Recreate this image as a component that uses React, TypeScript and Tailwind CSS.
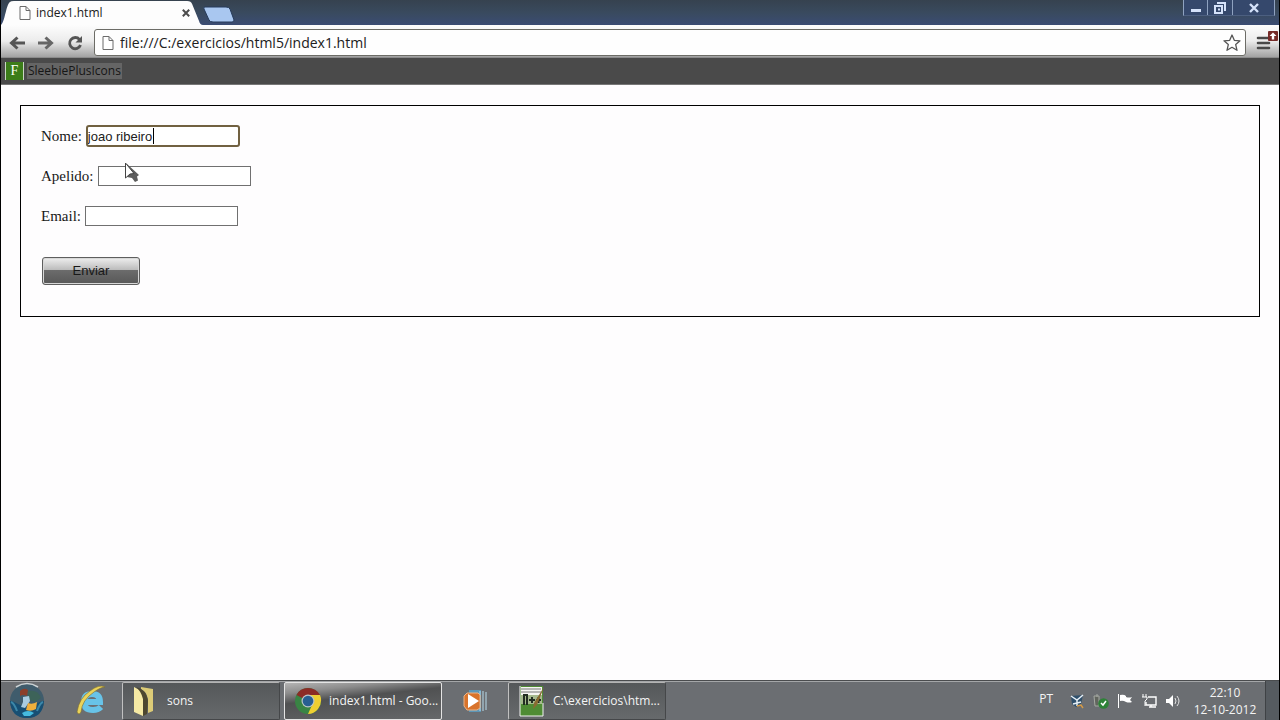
import { useState } from 'react';
import type { ReactNode } from 'react';

function PageIcon() {
  return (
    <svg aria-hidden="true" className="h-4 w-3 shrink-0" viewBox="0 0 12 16" fill="#fff" stroke="#6b6b6b">
      <path d="M1 1.5h6l4 4v9H1z" />
      <path d="M7 1.5v4h4" fill="none" />
    </svg>
  );
}

function TabStrip() {
  return (
    <div className="flex h-[25px] items-start justify-between bg-linear-to-b from-[#36424f] via-[#394a5e] to-[#3b4c73]">
      <div className="flex">
        <div className="relative h-[25px] w-[202px]">
          <svg aria-hidden="true" className="absolute inset-0 h-full w-full" viewBox="0 0 204 25" preserveAspectRatio="none">
            <path d="M0 25C4 22 5 5 9 2Q10 1 13 1H188Q192 1 193 4L200 21Q201 25 204 25Z" fill="#fdfdfd" />
          </svg>
          <div className="relative flex h-full items-center pr-[13px] pl-[18px]">
            <PageIcon />
            <span className="ml-[5px] grow text-[12px] leading-4 text-[#202020]">index1.html</span>
            <button type="button" aria-label="Close tab">
              <svg aria-hidden="true" className="h-2 w-2" viewBox="0 0 8 8" stroke="#4c4c4c" strokeWidth="2">
                <path d="M.8.8l6.4 6.4M7.2.8L.8 7.2" />
              </svg>
            </button>
          </div>
        </div>
        <button type="button" aria-label="New tab" className="mt-1">
          <svg aria-hidden="true" className="h-[17px] w-[32px]" viewBox="0 0 32 17">
            <path d="M2 1H23Q26 1 27 3L31 14Q31 16 29 16H10Q7 16 6 14L1 3Q0 1 2 1Z" fill="#a9c7f0" stroke="#263b5c" />
          </svg>
        </button>
      </div>
      <div className="mr-1 flex h-4 divide-x divide-[#8fa2c0] border-x border-b border-x-[#8fa2c0] border-b-[#4c5f80] bg-[#35486c]">
        <button type="button" aria-label="Minimize" className="flex w-6 items-center justify-center">
          <svg aria-hidden="true" className="h-3 w-3" viewBox="0 0 12 12" fill="#d5e2fa"><path d="M1 7h10v3H1z" /></svg>
        </button>
        <button type="button" aria-label="Restore" className="flex w-[25px] items-center justify-center">
          <svg aria-hidden="true" className="h-3 w-3" viewBox="0 0 12 12" fill="none" stroke="#d5e2fa" strokeWidth="2">
            <path d="M4 2V1h7v7h-1M1 4h7v7H1z" />
            <path d="M4 7.5h2" />
          </svg>
        </button>
        <button type="button" aria-label="Close" className="flex w-[41px] items-center justify-center">
          <svg aria-hidden="true" className="h-[10px] w-[10px]" viewBox="0 0 10 10" stroke="#d5e2fa" strokeWidth="2.4">
            <path d="M1 1l8 8M9 1L1 9" />
          </svg>
        </button>
      </div>
    </div>
  );
}

function Toolbar() {
  const [url, setUrl] = useState('file:///C:/exercicios/html5/index1.html');

  return (
    <div className="flex h-8 items-center bg-linear-to-b from-[#fdfdfd] via-[#ececec] to-[#a2a2a2] pr-2 pb-px pl-2 pt-1">
      <div className="flex w-[85px] shrink-0 gap-[13px]">
        <button type="button" aria-label="Back">
          <svg aria-hidden="true" className="h-4 w-4" viewBox="0 0 16 16" fill="none" stroke="#555" strokeWidth="3">
            <path d="M16 8H3M8.5 2.5L2.5 8l6 5.5" />
          </svg>
        </button>
        <button type="button" aria-label="Forward">
          <svg aria-hidden="true" className="h-4 w-4" viewBox="0 0 16 16" fill="none" stroke="#666" strokeWidth="3">
            <path d="M0 8h13M7.5 2.5l6 5.5-6 5.5" />
          </svg>
        </button>
        <button type="button" aria-label="Reload">
          <svg aria-hidden="true" className="h-4 w-4" viewBox="0 0 16 16">
            <path d="M12.5 4.5A5.600 5.600 0 1 0 13.5 10" fill="none" stroke="#555" strokeWidth="2.8" />
            <path d="M15 1v6.5H8.5z" fill="#555" />
          </svg>
        </button>
      </div>
      <div className="flex h-[27px] min-w-0 grow items-center rounded-[3px] border border-[#6c6c66] bg-[#fefefe] pr-1 pl-[7px]">
        <PageIcon />
        <input
          type="text"
          aria-label="Address"
          value={url}
          onChange={(e) => setUrl(e.target.value)}
          className="ml-[6px] min-w-0 grow bg-transparent text-[14px] leading-5 text-[#202020] outline-none"
        />
        <button type="button" aria-label="Bookmark this page">
          <svg aria-hidden="true" className="h-[18px] w-[18px]" viewBox="0 0 18 18" fill="#fff" stroke="#555" strokeWidth="1.3" strokeLinejoin="round">
            <path d="M9 1l2.3 5.3 5.7.5-4.3 3.8 1.3 5.700L9 13.3l-5 3 1.3-5.7L1 6.8l5.7-.5z" />
          </svg>
        </button>
      </div>
      <button type="button" aria-label="Menu" className="relative ml-[10px] h-4 w-[15px] shrink-0">
        <svg aria-hidden="true" className="h-4 w-[15px]" viewBox="0 0 15 16" stroke="#484848" strokeWidth="2.6" strokeLinecap="round">
          <path d="M2 3h11M2 8h11M2 13h11" />
        </svg>
        <svg aria-hidden="true" className="absolute -top-1 left-3 h-[10px] w-[10px]" viewBox="0 0 10 10">
          <rect width="10" height="10" rx="1" fill="#762b28" />
          <path d="M5 1.5L8.5 5H6.2v3.5H3.800V5H1.5z" fill="#fff" />
        </svg>
      </button>
    </div>
  );
}

function BookmarksBar() {
  return (
    <div className="flex h-7 items-center border-t border-b border-t-[#8b8b8b] border-b-[#777] bg-[#4a4a4a] pl-1">
      <a href="#bookmark" className="flex items-center gap-[3px] text-[12px] leading-4 text-[#161616]">
        <span className="flex h-[18px] w-[19px] items-center justify-center border-x border-[#c9d6c3] bg-[#3c7d19] font-['Liberation_Serif',serif] text-[14px] text-white">
          F
        </span>
        <span className="bg-[#656565] px-px">SleebiePlusIcons</span>
      </a>
    </div>
  );
}

type FieldProps = {
  id: string;
  label: string;
  type?: string;
  focused?: boolean;
  value: string;
  onChange: (value: string) => void;
};

function Field({ id, label, type = 'text', focused, value, onChange }: FieldProps) {
  return (
    <div className="flex h-5 items-center gap-1">
      <label htmlFor={id} className="text-[15px] leading-5">{label}</label>
      <input
        id={id}
        type={type}
        value={value}
        onChange={(e) => onChange(e.target.value)}
        className={`bg-white font-['Liberation_Sans',sans-serif] text-[13px] text-[#202020] outline-none ${
          focused ? 'h-[22px] w-[154px] rounded-[3px] border-2 border-[#716141]' : 'h-5 w-[153px] border border-[#707070] px-px'
        }`}
      />
    </div>
  );
}

function ContactForm() {
  const [nome, setNome] = useState('joao ribeiro');
  const [apelido, setApelido] = useState('');
  const [email, setEmail] = useState('');

  return (
    <form
      onSubmit={(e) => e.preventDefault()}
      className="relative flex flex-col gap-5 border border-black px-5 pt-5 pb-[31px] font-['Liberation_Serif',serif] text-[#181818]"
    >
      <div className="relative">
        <Field id="nome" label="Nome:" focused value={nome} onChange={setNome} />
        {/* text caret */}
        <span className="absolute top-[2px] left-28 h-4 w-px bg-black" />
      </div>
      <Field id="apelido" label="Apelido:" value={apelido} onChange={setApelido} />
      <Field id="email" label="Email:" type="email" value={email} onChange={setEmail} />
      <button
        type="submit"
        className="mt-[11px] ml-px h-7 w-[98px] rounded-[3px] border border-[#5e5e5e] bg-[linear-gradient(#eeeeee,#bcbcbc_45%,#6c6c6c_46%,#585858)] font-['Liberation_Sans',sans-serif] text-[13px] text-[#181818] inset-ring inset-ring-[#d8d8d8]"
      >
        Enviar
      </button>
      {/* mouse pointer */}
      <svg aria-hidden="true" className="absolute top-[56px] left-[103px] h-5 w-4" viewBox="0 0 16 20">
        <path d="M3 2L15 13l-2 1.500 1 4-3 1.500-3-4-5-1z" fill="#5c5c5c" />
        <path d="M1.5 1v15L6 12l4-.5z" fill="#fff" stroke="#444" />
      </svg>
    </form>
  );
}

function StartIcon() {
  return (
    <svg aria-hidden="true" className="h-[37px] w-[38px]" viewBox="0 0 38 37">
      <circle cx="19" cy="19" r="17" fill="#3f5c6c" />
      <path d="M8 5Q19-2 30 5" fill="none" stroke="#cbd2d4" strokeWidth="1.5" />
      <path d="M20 9q10-2 13 7l-6 4-8-3z" fill="#3d6359" />
      <path d="M2 19q3 0 8 3l9 4 9-4q5-3 8-3-1 17-17 17T2 19z" fill="#174f73" />
      <path d="M3 20q3 1 6 9M35 20q-3 1-6 9" fill="none" stroke="#3c87a8" strokeWidth="2" />
      <path d="M12 9q4-4 8-1l-1 6q-4-2-7 0z" fill="#8b3f2a" />
      <path d="M15 15l6-1 1 5-5 7-4-1 2-5z" fill="#a9cce0" />
      <path d="M20 21q4 2 9-1l-1 7q-5 3-10 1z" fill="#f0af3c" />
      <path d="M14 31q6-4 12 0l-4 3h-6z" fill="#46bbdf" />
    </svg>
  );
}

function ExplorerIcon() {
  return (
    <svg aria-hidden="true" className="h-[34px] w-[34px]" viewBox="0 0 34 34">
      <path d="M9 18h17q0-8-8-8-8 0-8 8 0 8 9 8 5 0 8-3" fill="none" stroke="#68c3e8" strokeWidth="6" />
      <path d="M3 28Q5 14 16 7 25 0 31 3 27 3 20 8 8 16 7 28 5 32 3 28z" fill="#ead35a" stroke="#806e2b" strokeWidth=".6" />
    </svg>
  );
}

function FolderIcon() {
  return (
    <svg aria-hidden="true" className="h-8 w-6" viewBox="0 0 24 32">
      <path d="M2 2l9 5v24l-9-4z" fill="#f5e9a4" />
      <path d="M9 2l12 2v22l-5 2V14q-2-8-7-10z" fill="#dccb77" />
      <path d="M4 2q10 2 12 14l-1 13-4 2V14Q9 6 4 2z" fill="#4d472f" />
    </svg>
  );
}

function ChromeIcon() {
  return (
    <svg aria-hidden="true" className="h-7 w-7" viewBox="0 0 28 28">
      <circle cx="14" cy="14" r="13" fill="#398444" />
      <path d="M14 14L2.5 8Q6 1 14 1q8 0 12 7z" fill="#8c2b26" />
      <path d="M14 14V8h12q3 7-2 14-4 5-10 5l4-9z" fill="#efcf32" />
      <circle cx="14" cy="14" r="6.5" fill="#bcc6c8" />
      <circle cx="14" cy="14" r="5.3" fill="#285f92" />
    </svg>
  );
}

function MediaIcon() {
  return (
    <svg aria-hidden="true" className="h-6 w-6" viewBox="0 0 24 24">
      <path d="M6 1h12v22H6z" fill="#5d96b7" />
      <path d="M17 2v20M20 2v20M23 3v18" stroke="#b9dcec" />
      <path d="M4 4h11l2 2v13l-3 2H4l-3-4V7z" fill="#d8732b" stroke="#eab487" />
      <path d="M5 5l11 7-11 7z" fill="#fff" />
    </svg>
  );
}

function NotepadIcon() {
  return (
    <svg aria-hidden="true" className="h-8 w-7" viewBox="0 0 28 32">
      <path d="M2 1h23v30H2z" fill="#4f8c34" />
      <path d="M3 2h21v8H3z" fill="#f5f5f2" />
      <path d="M3 4h20M3 7h20" stroke="#777" />
      <path d="M3 10h21v9H3z" fill="#a5b98d" />
      <path d="M6 20V10h3v10M11 15h6M14 12v6M18 15h5M20.500 12v6" fill="none" stroke="#222d22" strokeWidth="2" />
      <path d="M26 2l-7 18-4 4 1-6z" fill="#896b32" />
      <path d="M2 1v30h23V18" fill="none" stroke="#f2f2f2" />
    </svg>
  );
}

type TaskButtonProps = {
  icon: ReactNode;
  label: string;
  active?: boolean;
};

function TaskButton({ icon, label, active }: TaskButtonProps) {
  return (
    <button
      type="button"
      className={`flex h-[38px] w-[158px] shrink-0 items-center rounded-[2px] border pl-2 text-[12px] leading-4 text-[#f4f4f4] ${
        active
          ? 'border-[#e4e4e4] bg-[linear-gradient(174deg,#b4b4b4,#8d8d8d_20%,#505152_40%,#66686a)]'
          : 'border-t-[#b4b4b4] border-r-[#454749] border-b-[#454749] border-l-[#c1c1c1] bg-linear-to-b from-[#55585a] to-[#676a6c]'
      }`}
    >
      <span className="flex w-[36px] items-center justify-start pl-px">{icon}</span>
      <span>{label}</span>
    </button>
  );
}

function Tray() {
  return (
    <div className="flex items-center gap-2">
      <button type="button" className="mr-2 -mt-1 text-[12px] leading-4">PT</button>
      <svg aria-hidden="true" className="h-4 w-4" viewBox="0 0 16 16">
        <path d="M2 3l12-1-2 9-5 3-4-3z" fill="#2f506c" />
        <path d="M2 3l6 4 6-5M8 7v6M4 11l8-2" fill="none" stroke="#e5eef5" strokeWidth="1.5" />
        <path d="M8 13l4-1 2 3" fill="none" stroke="#d69a45" strokeWidth="1.5" />
      </svg>
      <svg aria-hidden="true" className="h-4 w-4" viewBox="0 0 16 16">
        <path d="M1 3h5v10H2zM4 1v3" fill="#62665f" stroke="#a6aaa3" />
        <circle cx="10.500" cy="10.500" r="5.300" fill="#2d8237" />
        <path d="M8 10l2 2 3-4" fill="none" stroke="#fff" strokeWidth="1.5" />
      </svg>
      <svg aria-hidden="true" className="h-4 w-4" viewBox="0 0 16 16" fill="#fff">
        <path d="M1 1h1v14H1zM3 2q4-1 6 1v6q-3-2-6-1zM9 4q3 1 6 0l-2 3 2 2q-3 1-6 0z" />
      </svg>
      <svg aria-hidden="true" className="h-4 w-4" viewBox="0 0 16 16" fill="none" stroke="#fff">
        <path d="M7 4h8v8H5V9M8 14h7M10 12v2" strokeWidth="1.4" />
        <path d="M2 1v3M5 1v3M1 4h5v2L4 8v5" />
      </svg>
      <svg aria-hidden="true" className="h-4 w-4" viewBox="0 0 16 16" fill="none" stroke="#e2e2e2">
        <path d="M1 6h3l4-4v12l-4-4H1z" fill="#fff" stroke="none" />
        <path d="M10 5q2 3 0 6M12 3q4 5 0 10" />
      </svg>
    </div>
  );
}

function Taskbar() {
  return (
    <footer className="flex h-10 items-center border-t border-[#4a4c4e] bg-[#6b6e72] text-[12px] text-[#f4f4f4] inset-shadow-[0_1px_0_#a4a6a8]">
      <button type="button" aria-label="Start" className="ml-[7px]">
        <StartIcon />
      </button>
      <button type="button" aria-label="Internet Explorer" className="ml-[28px]">
        <ExplorerIcon />
      </button>
      <div className="ml-[14px] flex items-center">
        <TaskButton icon={<FolderIcon />} label="sons" />
        <div className="ml-1">
          <TaskButton icon={<ChromeIcon />} label="index1.html - Goo..." active />
        </div>
        <button type="button" aria-label="Media Player" className="flex w-[66px] justify-center">
          <MediaIcon />
        </button>
        <TaskButton icon={<NotepadIcon />} label="C:\exercicios\htm..." />
      </div>
      <div className="ml-auto flex h-full items-center">
        <Tray />
        <div className="ml-3 w-16 text-center leading-[17px] whitespace-nowrap">
          <p>22:10</p>
          <p>12-10-2012</p>
        </div>
        <button type="button" aria-label="Show desktop" className="ml-2 h-full w-[14px] border-l border-[#3f4245] bg-[#565b60]" />
      </div>
    </footer>
  );
}

export default function App() {
  return (
    <div className="flex min-h-screen flex-col border-x border-black bg-[#fefdfe] font-['Open_Sans',sans-serif]">
      <header>
        <TabStrip />
        <Toolbar />
        <BookmarksBar />
      </header>
      <main className="grow px-[19px] pt-5">
        <ContactForm />
      </main>
      <Taskbar />
    </div>
  );
}
